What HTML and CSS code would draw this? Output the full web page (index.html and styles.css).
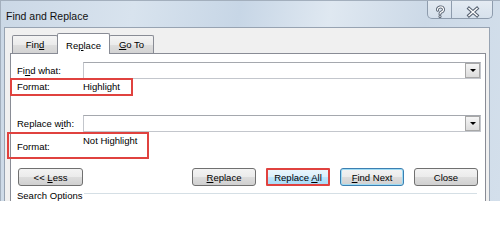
FILE: index.html
```html
<!DOCTYPE html>
<html>
<head>
<meta charset="utf-8">
<link rel="stylesheet" href="styles.css">
</head>
<body>
<div class="window">
  <div class="titlebar">
    <span class="title">Find and Replace</span>
    <div class="caption">
      <span class="cap-btn help">
        <svg width="23" height="18" viewBox="0 0 23 18">
          <path d="M9.6 9.2 a3 2.6 0 1 1 3.6 1.9 c-0.9 0.5 -1.2 0.9 -1.2 1.9" fill="none" stroke="#566170" stroke-width="3" stroke-linecap="round"/>
          <circle cx="12" cy="15.4" r="1.5" fill="#566170"/>
          <path d="M9.6 9.2 a3 2.6 0 1 1 3.6 1.9 c-0.9 0.5 -1.2 0.9 -1.2 1.9" fill="none" stroke="#ffffff" stroke-width="1.2" stroke-linecap="round"/>
          <circle cx="12" cy="15.4" r="0.6" fill="#ffffff"/>
        </svg>
      </span>
      <span class="cap-btn close">
        <svg width="40" height="18" viewBox="0 0 40 18">
          <path d="M17 7.5 L25 14.5 M25 7.5 L17 14.5" fill="none" stroke="#566170" stroke-width="3.4" stroke-linecap="square"/>
          <path d="M17 7.5 L25 14.5 M25 7.5 L17 14.5" fill="none" stroke="#ffffff" stroke-width="1.4" stroke-linecap="square"/>
        </svg>
      </span>
    </div>
  </div>
  <div class="client">
    <div class="tabs">
      <span class="tab tab-find">Fin<u>d</u></span>
      <span class="tab tab-replace active">Re<u>p</u>lace</span>
      <span class="tab tab-goto"><u>G</u>o To</span>
    </div>
    <div class="panel">
      <div class="field">
        <span class="label">Fi<u>n</u>d what:</span>
        <div class="combo"><span class="drop"></span></div>
      </div>
      <div class="format">
        <span class="label">Format:</span>
        <span class="value">Highlight</span>
      </div>
      <div class="field field-replace">
        <span class="label">Replace w<u>i</u>th:</span>
        <div class="combo"><span class="drop"></span></div>
      </div>
      <div class="format format-replace">
        <span class="label">Format:</span>
        <span class="value">Not Highlight</span>
      </div>
      <div class="buttons">
        <button class="btn btn-less">&lt;&lt; <u>L</u>ess</button>
        <div class="btn-group">
          <button class="btn"><u>R</u>eplace</button>
          <button class="btn btn-hover btn-marked">Replace <u>A</u>ll</button>
          <button class="btn btn-default"><u>F</u>ind Next</button>
          <button class="btn">Close</button>
        </div>
      </div>
      <div class="options">
        <span class="options-title">Search Options</span>
        <span class="options-line"></span>
      </div>
    </div>
  </div>
  <div class="mark mark-find"></div>
  <div class="mark mark-replace"></div>
</div>
</body>
</html>
```
FILE: styles.css
```css
* { box-sizing: border-box; }
html, body { margin: 0; padding: 0; }
body {
  width: 500px;
  height: 201px;
  overflow: hidden;
  font-family: "Liberation Sans", Arial, sans-serif;
  font-size: 9.5px;
  color: #000;
}
u { text-decoration: underline; text-underline-offset: 1px; }

.window {
  position: relative;
  width: 500px;
  height: 201px;
  overflow: hidden;
  border-top: 1px solid #a3afbd;
  border-left: 1px solid #a3afbd;
  background: linear-gradient(100deg, #cbd8e6 0%, #d8e3ee 25%, #c7d6e6 45%, #dfe8f1 62%, #ccd9e7 80%, #d3dfeb 100%);
}

.titlebar {
  height: 26px;
  display: flex;
  justify-content: space-between;
  align-items: flex-start;
}
.title {
  padding: 8px 0 0 5px;
  font-size: 10.5px;
  line-height: 14px;
  color: #111;
}
.caption {
  display: flex;
  margin-right: 7px;
  height: 18px;
  border: 1px solid #8e9cad;
  border-top: none;
  border-radius: 0 0 5px 5px;
  background: linear-gradient(rgba(255,255,255,0.45), rgba(255,255,255,0.15));
  overflow: hidden;
}
.cap-btn { display: block; height: 18px; }
.cap-btn svg { display: block; }
.help { width: 24px; border-right: 1px solid #8e9cad; }
.close { width: 40px; }

.client {
  margin-left: 3px;
  width: 486px;
  height: 180px;
  background: #f0f0f0;
  border: 1px solid #97a3b2;
  border-bottom: none;
}

.tabs {
  display: flex;
  align-items: flex-end;
  margin-top: 5px;
  padding-left: 7px;
  height: 20px;
}
.tab {
  display: flex;
  align-items: center;
  justify-content: center;
  height: 18px;
  border: 1px solid #898c95;
  border-bottom: none;
  background: linear-gradient(#f4f4f4 0%, #ebebeb 50%, #dedede 50%, #d3d3d3 100%);
  border-radius: 2px 2px 0 0;
}
.tab + .tab { margin-left: -1px; }
.tab-find { width: 46px; }
.tab-replace { width: 53px; }
.tab-goto { width: 45px; }
.tab.active {
  position: relative;
  z-index: 1;
  height: 21px;
  margin-bottom: -1px;
  padding-top: 2px;
  background: #fff;
}

.panel {
  margin-left: 5px;
  width: 476px;
  height: 200px;
  background: #fff;
  border: 1px solid #898c95;
  padding: 8px 4px 0 6px;
}

.field {
  display: grid;
  grid-template-columns: 66px 1fr;
  align-items: center;
  height: 17px;
}
.field-replace { margin-top: 20px; }
.label { white-space: nowrap; }

.combo {
  height: 17px;
  display: flex;
  justify-content: flex-end;
  align-items: center;
  border: 1px solid #c3c6cc;
  border-top-color: #a5a8ae;
  padding-right: 0;
  background: #fff;
}
.drop {
  position: relative;
  width: 15px;
  height: 15px;
  border: 1px solid #a7a7a7;
  background: linear-gradient(#f5f5f5, #dcdcdc);
}
.drop::after {
  content: "";
  position: absolute;
  left: 4px;
  top: 5px;
  border-left: 3px solid transparent;
  border-right: 3px solid transparent;
  border-top: 3px solid #000;
}

.format {
  display: grid;
  grid-template-columns: 66px 1fr;
  height: 16px;
  line-height: 16px;
}
.format-replace { height: 26px; }
.format-replace .label { margin-top: 7px; }
.format-replace .value { margin-top: 1px; }

.buttons {
  display: flex;
  justify-content: space-between;
  margin-top: 10px;
  padding: 0 3px 0 1px;
}
.btn-group { display: flex; gap: 10px; }
.btn {
  width: 64px;
  height: 18px;
  padding: 0;
  font-family: "Liberation Sans", Arial, sans-serif;
  font-size: 9.5px;
  color: #000;
  border: 1px solid #707070;
  border-radius: 3px;
  background: linear-gradient(#f3f3f3 0%, #ebebeb 50%, #dddddd 50%, #d0d0d0 100%);
}
.btn-less { width: 65px; }
.btn-hover {
  background: linear-gradient(#eaf6fd 0%, #d9f0fc 50%, #bee6fd 50%, #a9dbf6 100%);
}
.btn-marked {
  border: 2px solid #e0423f;
  border-radius: 1px;
}
.btn-default {
  border-color: #3c7fb1;
  box-shadow: inset 0 0 0 1px #9edcf5;
}

.options {
  display: flex;
  margin-top: 3px;
  height: 14px;
  line-height: 14px;
}
.options-title { white-space: nowrap; }
.options-line {
  flex: 1;
  height: 1px;
  margin: 4px 4px 0 2px;
  background: #d5dfe5;
}

.mark {
  position: absolute;
  border: 2px solid #e0423f;
}
.mark-find { left: 9px; top: 77px; width: 123px; height: 18px; }
.mark-replace { left: 6px; top: 131px; width: 142px; height: 27px; }
```
